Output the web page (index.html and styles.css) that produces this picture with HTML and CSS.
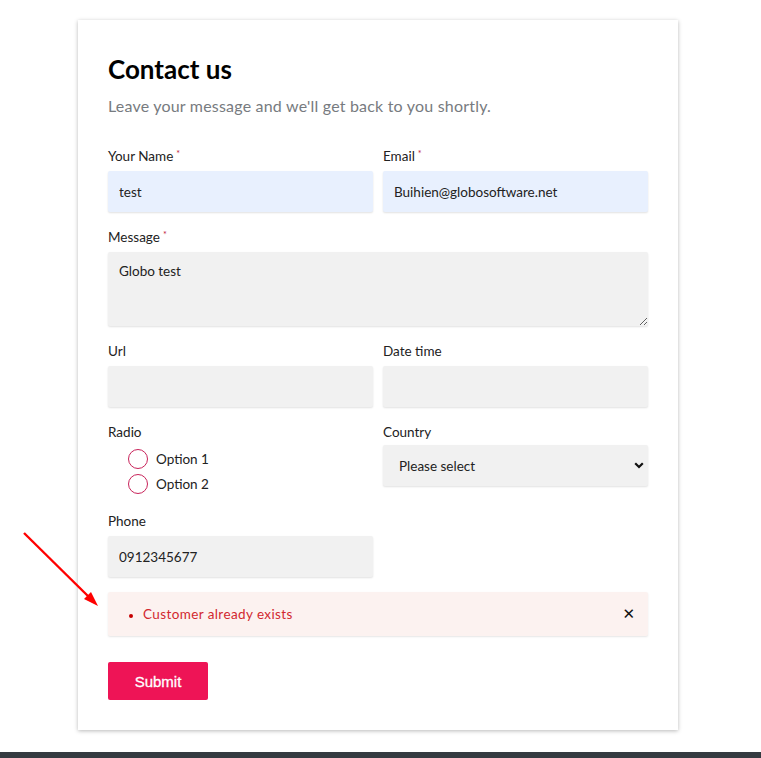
FILE: index.html
```html
<!DOCTYPE html>
<html lang="en">
<head>
<meta charset="utf-8">
<title>Contact us</title>
<link rel="stylesheet" href="styles.css">
</head>
<body>
<main class="page">
  <form class="card">
    <h1 class="title">Contact us</h1>
    <p class="subtitle">Leave your message and we'll get back to you shortly.</p>
    <div class="grid">
      <div class="field">
        <label class="label">Your Name<span class="req">*</span></label>
        <input class="input autofill" type="text" value="test">
      </div>
      <div class="field">
        <label class="label">Email<span class="req">*</span></label>
        <input class="input autofill" type="text" value="Buihien@globosoftware.net">
      </div>
      <div class="field wide">
        <label class="label">Message<span class="req">*</span></label>
        <textarea class="input textarea">Globo test</textarea>
      </div>
      <div class="field">
        <label class="label">Url</label>
        <input class="input" type="text">
      </div>
      <div class="field">
        <label class="label">Date time</label>
        <input class="input" type="text">
      </div>
      <div class="field">
        <label class="label">Radio</label>
        <div class="radios">
          <label class="radio"><input type="radio" name="r"><span>Option 1</span></label>
          <label class="radio"><input type="radio" name="r"><span>Option 2</span></label>
        </div>
      </div>
      <div class="field">
        <label class="label">Country</label>
        <div class="select-wrap">
          <select class="input select"><option>Please select</option></select>
          <svg class="chevron" width="10" height="7" viewBox="0 0 10 7"><path d="M1.2 1.2 L5 5 L8.8 1.2" fill="none" stroke="#111" stroke-width="2.2"/></svg>
        </div>
      </div>
      <div class="field">
        <label class="label">Phone</label>
        <input class="input" type="text" value="0912345677">
      </div>
    </div>
    <div class="alert">
      <ul class="alert-list"><li>Customer already exists</li></ul>
      <span class="close">&#x2715;</span>
    </div>
    <button class="submit" type="button">Submit</button>
  </form>
</main>
<footer class="footer"></footer>
<svg class="annotation" width="110" height="90" viewBox="0 0 110 90">
  <line x1="24" y1="533" x2="92" y2="600" transform="translate(0,-520)" stroke="#f00" stroke-width="2.4"/>
  <polygon points="98,606 84,599 91,592" transform="translate(0,-520)" fill="#f00"/>
</svg>
</body>
</html>
```
FILE: styles.css
```css
* { box-sizing: border-box; }
html, body { margin: 0; padding: 0; background: #fff; }
body {
  font-family: "Lato", "Noto Sans", sans-serif;
  color: #222;
  position: relative;
}
.page { padding-top: 20px; padding-bottom: 22px; }
.card {
  width: 600px;
  margin-left: 78px;
  background: #fff;
  padding: 35px 30px 30px;
  box-shadow: 0 1px 4px rgba(0,0,0,0.28);
}
.title {
  margin: 0;
  font-size: 26px;
  line-height: 29px;
  font-weight: 700;
  color: #000;
}
.subtitle {
  margin: 12px 0 0;
  font-size: 16px;
  line-height: 20px;
  color: #777b80;
  letter-spacing: 0.2px;
}
.grid {
  margin-top: 31px;
  display: grid;
  grid-template-columns: 1fr 1fr;
  column-gap: 10px;
  row-gap: 16px;
}
.field { display: flex; flex-direction: column; }
.wide { grid-column: 1 / span 2; }
.label {
  font-size: 13.5px;
  line-height: 18px;
  height: 18px;
  color: #222;
  margin-bottom: 6px;
}
.req { color: #c0183c; font-size: 9px; margin-left: 3px; position: relative; top: -4px; line-height: 0; }
.input {
  display: block;
  width: 100%;
  height: 41px;
  border: 0;
  border-radius: 2px;
  background: #f1f1f1;
  box-shadow: 0 1px 2px rgba(0,0,0,0.12);
  padding: 0 11px;
  font-family: inherit;
  font-size: 13.5px;
  color: #222;
  outline: none;
}
.autofill { background: #e8f0fe; }
.textarea {
  height: 74px;
  padding: 10px 11px;
  line-height: 18px;
  resize: vertical;
}
.radios { display: flex; flex-direction: column; padding-left: 20px; margin-top: -1px; }
.radio {
  display: flex;
  align-items: center;
  height: 25px;
  font-size: 13.5px;
  color: #222;
}
.radio input {
  appearance: none;
  -webkit-appearance: none;
  width: 20px;
  height: 20px;
  margin: 0 8px 0 0;
  border: 1.5px solid #c8235a;
  border-radius: 50%;
  background: #fff;
}
.select-wrap { position: relative; margin-top: -2px; }
.select {
  appearance: none;
  -webkit-appearance: none;
  padding-left: 16px;
}
.chevron { position: absolute; right: 4px; top: 17px; }
.alert {
  margin-top: 15px;
  height: 44px;
  background: #fcf2f0;
  box-shadow: 0 1px 2px rgba(0,0,0,0.1);
  border-radius: 2px;
  display: flex;
  align-items: center;
  justify-content: space-between;
  padding: 0 14px 0 20px;
}
.alert-list {
  margin: 0;
  padding: 0 0 0 15px;
  font-size: 13.5px;
  color: #d2282f;
  letter-spacing: 0.4px;
}
.alert-list li::marker { color: #c60000; font-size: 11px; }
.close { font-size: 15px; color: #111; font-family: "DejaVu Sans", sans-serif; margin-right: -1px; }
.submit {
  margin-top: 26px;
  width: 100px;
  height: 38px;
  border: 0;
  border-radius: 2px;
  background: #ee1456;
  color: #fff;
  font-family: "Liberation Sans", Arial, sans-serif;
  font-size: 15px;
  font-weight: 400;
  -webkit-text-stroke: 0.3px #fff;
  display: block;
}
.footer { height: 40px; background: #343a40; }
.annotation { position: absolute; left: 0; top: 520px; pointer-events: none; }
```
